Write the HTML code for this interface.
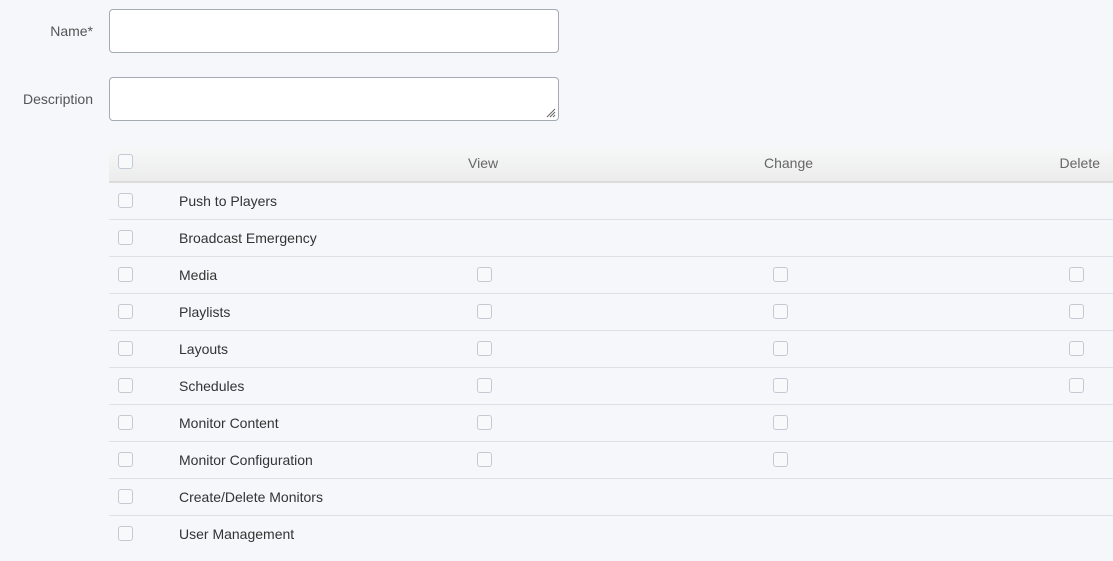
<!DOCTYPE html>
<html><head><style>
body{margin:0;background:#f5f7fa;font-family:"Liberation Sans",sans-serif;width:1113px;height:561px;overflow:hidden;position:relative;color:#333}
.lbl{position:absolute;font-size:14px;color:#555;text-align:right;width:93px;left:0}
.inp{position:absolute;left:109px;width:448px;height:42px;background:#fff;border:1px solid #a4abb3;border-radius:4px}
.hdr{position:absolute;left:109px;top:146px;width:1004px;height:35px;background:linear-gradient(#f7f8f9,#ececec);border-bottom:2px solid #dcdcdc}
.hdr span{position:absolute;top:9px;font-size:14px;color:#666}
.cb{position:absolute;width:13px;height:13px;border:1px solid #c3cad3;border-radius:3px;background:#f8f9fb}
.row{position:absolute;left:109px;width:1004px;height:36px;border-bottom:1px solid #dde0e4}
.row .t{position:absolute;left:70px;top:10px;font-size:14px;color:#333}
.row .cb{top:10px}
</style></head><body>
<div class="lbl" style="top:23px">Name*</div>
<div class="inp" style="top:9px"></div>
<div class="lbl" style="top:91px">Description</div>
<div class="inp" style="top:77px"><svg width="10" height="10" style="position:absolute;right:2px;bottom:2px"><path d="M9 1L1 9M9 4L4 9M9 7L7 9" stroke="#666" stroke-width="1"/></svg></div>
<div class="hdr"><div class="cb" style="left:9px;top:8px"></div><span style="left:359px">View</span><span style="left:655px">Change</span><span style="right:13px">Delete</span></div>
<div class="row" style="top:183px"><div class="cb" style="left:9px"></div><div class="t">Push to Players</div></div>
<div class="row" style="top:220px"><div class="cb" style="left:9px"></div><div class="t">Broadcast Emergency</div></div>
<div class="row" style="top:257px"><div class="cb" style="left:9px"></div><div class="t">Media</div><div class="cb" style="left:368px"></div><div class="cb" style="left:664px"></div><div class="cb" style="left:960px"></div></div>
<div class="row" style="top:294px"><div class="cb" style="left:9px"></div><div class="t">Playlists</div><div class="cb" style="left:368px"></div><div class="cb" style="left:664px"></div><div class="cb" style="left:960px"></div></div>
<div class="row" style="top:331px"><div class="cb" style="left:9px"></div><div class="t">Layouts</div><div class="cb" style="left:368px"></div><div class="cb" style="left:664px"></div><div class="cb" style="left:960px"></div></div>
<div class="row" style="top:368px"><div class="cb" style="left:9px"></div><div class="t">Schedules</div><div class="cb" style="left:368px"></div><div class="cb" style="left:664px"></div><div class="cb" style="left:960px"></div></div>
<div class="row" style="top:405px"><div class="cb" style="left:9px"></div><div class="t">Monitor Content</div><div class="cb" style="left:368px"></div><div class="cb" style="left:664px"></div></div>
<div class="row" style="top:442px"><div class="cb" style="left:9px"></div><div class="t">Monitor Configuration</div><div class="cb" style="left:368px"></div><div class="cb" style="left:664px"></div></div>
<div class="row" style="top:479px"><div class="cb" style="left:9px"></div><div class="t">Create/Delete Monitors</div></div>
<div class="row" style="top:516px;border-bottom:none"><div class="cb" style="left:9px"></div><div class="t">User Management</div></div>
</body></html>
